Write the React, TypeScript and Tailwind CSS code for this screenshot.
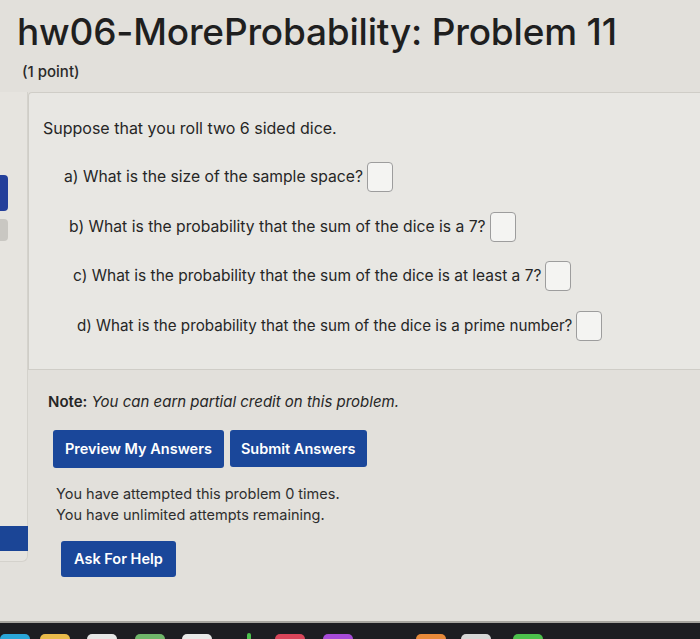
import React from "react";

const questions = [
  { label: "a) What is the size of the sample space?", indent: "pl-[35px]", gap: "pt-[23px]", size: "text-[15.7px]" },
  { label: "b) What is the probability that the sum of the dice is a 7?", indent: "pl-[40px]", gap: "pt-[20px]", size: "text-[15.7px]" },
  { label: "c) What is the probability that the sum of the dice is at least a 7?", indent: "pl-[44px]", gap: "pt-[19px]", size: "text-[15.5px]" },
  { label: "d) What is the probability that the sum of the dice is a prime number?", indent: "pl-[48px]", gap: "pt-[20px]", size: "text-[15.2px]" },
];

const dockIcons = [
  { c: "bg-[#2aa5d8]", m: "ml-[0px]" },
  { c: "bg-[#e9b94a]", m: "ml-[10px]" },
  { c: "bg-[#e6e6e6]", m: "ml-[17px]" },
  { c: "bg-[#6fb56a]", m: "ml-[18px]" },
  { c: "bg-[#e8e8e8]", m: "ml-[17px]" },
  { c: "bg-[#4cc04c] !w-[4px] !h-[6px]", m: "ml-[35px]" },
  { c: "bg-[#d9455a]", m: "ml-[24px]" },
  { c: "bg-[#a64ad8]", m: "ml-[18px]" },
  { c: "bg-[#e8893a]", m: "ml-[63px]" },
  { c: "bg-[#d6d6d6]", m: "ml-[15px]" },
  { c: "bg-[#4cc04c]", m: "ml-[22px]" },
];

export default function App() {
  return (
    <div
      className="relative flex h-[639px] w-[700px] flex-col overflow-hidden bg-[#e2e0db] text-[#262626]"
      style={{ fontFamily: "Inter, 'Liberation Sans', sans-serif" }}
    >
      {/* Header */}
      <div className="pl-[17px] pt-[10px]">
        <h1 className="text-[37px] font-medium leading-[44px] tracking-[-0.2px] text-[#1f1f1f]">
          hw06-MoreProbability: Problem 11
        </h1>
        <p className="pl-[5px] pt-[8px] text-[15px] font-medium leading-[20px] text-[#2a2a2a]">(1 point)</p>
      </div>

      {/* Body */}
      <div className="mt-[10px] flex flex-1">
        {/* Sidebar */}
        <div className="flex w-[28px] shrink-0 flex-col">
          <div className="h-[470px] w-[28px] rounded-br-[6px] border-r border-b border-[#d4d2cc] bg-[#e6e4df] pt-[83px]">
            <div className="h-[36px] w-[8px] rounded-r-[4px] bg-[#243f9a]" />
            <div className="mt-[8px] h-[22px] w-[8px] rounded-r-[4px] bg-[#c9c7c2]" />
            <div className="mt-[285px] h-[25px] w-[28px] bg-[#1b4596]" />
          </div>
        </div>

        {/* Main */}
        <div className="flex flex-1 flex-col">
          {/* Question box */}
          <div className="h-[278px] rounded-tl-[4px] border-t border-l border-b border-[#cfcdc7] bg-[#e8e7e3] pt-[24px]">
            <p className="pl-[14px] text-[16px] leading-[22px]">Suppose that you roll two 6 sided dice.</p>
            {questions.map((q) => (
              <div key={q.label} className={`flex items-center ${q.indent} ${q.gap}`}>
                <span className={`${q.size} leading-[22px]`}>{q.label}</span>
                <span className="ml-[4px] h-[30px] w-[26px] rounded-[4px] border border-[#9d9d9d] bg-[#f4f4f2]" />
              </div>
            ))}
          </div>

          <p className="pl-[20px] pt-[22px] text-[15px] leading-[20px]">
            <span className="font-semibold">Note:</span> <em>You can earn partial credit on this problem.</em>
          </p>

          <div className="flex gap-[6px] pl-[25px] pt-[18px]">
            <button className="h-[38px] rounded-[3px] bg-[#1a479a] px-[12px] text-[14.5px] font-semibold text-white">
              Preview My Answers
            </button>
            <button className="h-[37px] rounded-[3px] bg-[#1a479a] px-[11px] text-[14.5px] font-semibold text-white">
              Submit Answers
            </button>
          </div>

          <div className="pl-[28px] pt-[15px] text-[14.5px] leading-[21px] text-[#2e2e2e]">
            <p>You have attempted this problem 0 times.</p>
            <p>You have unlimited attempts remaining.</p>
          </div>

          <div className="pl-[33px] pt-[16px]">
            <button className="h-[36px] rounded-[3px] bg-[#1a479a] px-[13px] text-[14.5px] font-semibold text-white">
              Ask For Help
            </button>
          </div>
        </div>
      </div>

      {/* Dock */}
      <div className="flex h-[18px] shrink-0 items-end border-t-[2px] border-[#a7a5a0] bg-[#1d1d22]">
        {dockIcons.map((d, i) => (
          <div key={i} className={`h-[5px] w-[30px] shrink-0 rounded-t-[6px] ${d.m} ${d.c}`} />
        ))}
      </div>
    </div>
  );
}
